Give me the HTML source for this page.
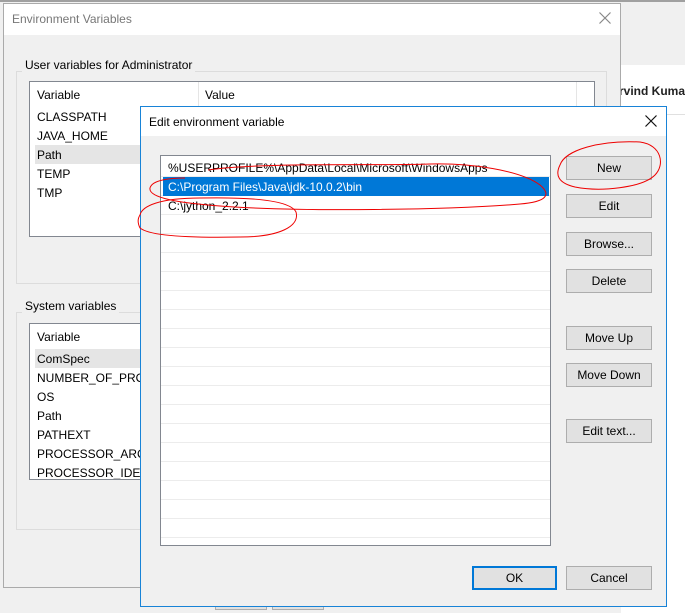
<!DOCTYPE html>
<html><head><style>
*{margin:0;padding:0;box-sizing:border-box}
body{width:685px;height:613px;position:relative;overflow:hidden;background:#f0f0f0;font-family:"Liberation Sans",sans-serif;font-size:12px;color:#000}
.a{position:absolute}
.btn{position:absolute;background:#e1e1e1;border:1px solid #adadad;text-align:center;line-height:22px;font-size:12px;width:86px;height:24px}
.row{position:absolute;left:37px;font-size:12px}
</style></head><body>
<div class="a" style="left:0;top:0;width:685px;height:2px;background:#a0a0a0"></div>
<div class="a" style="left:621px;top:65px;width:64px;height:548px;background:#fff"></div>
<div class="a" style="left:621px;top:114px;width:64px;height:1px;background:#e0e0e0"></div>
<div class="a" style="left:619px;top:84px;font-weight:bold;font-size:12px;color:#222;white-space:nowrap">rvind Kumar</div>
<div class="a" style="left:3px;top:3px;width:618px;height:585px;background:#f0f0f0;border:1px solid #aaa"></div>
<div class="a" style="left:4px;top:4px;width:616px;height:31px;background:#fff"></div>
<div class="a" style="left:12px;top:12px;color:#777;font-size:12px">Environment Variables</div>
<svg class="a" style="left:599px;top:12px" width="12" height="12"><path d="M0.5 0.5L11.5 11.5M11.5 0.5L0.5 11.5" stroke="#888" stroke-width="1.2"/></svg>
<div class="a" style="left:16px;top:71px;width:591px;height:213px;border:1px solid #dcdcdc"></div>
<div class="a" style="left:22px;top:58px;background:#f0f0f0;padding:0 3px">User variables for Administrator</div>
<div class="a" style="left:29px;top:81px;width:566px;height:156px;background:#fff;border:1px solid #828790"></div>
<div class="a" style="left:198px;top:82px;width:1px;height:24px;background:#e5e5e5"></div>
<div class="a" style="left:576px;top:82px;width:1px;height:24px;background:#e5e5e5"></div>
<div class="a" style="left:37px;top:88px">Variable</div>
<div class="a" style="left:205px;top:88px">Value</div>
<div class="a" style="left:35px;top:145px;width:110px;height:19px;background:#e5e5e5"></div>
<div class="row" style="top:110px">CLASSPATH</div>
<div class="row" style="top:129px">JAVA_HOME</div>
<div class="row" style="top:148px">Path</div>
<div class="row" style="top:167px">TEMP</div>
<div class="row" style="top:186px">TMP</div>
<div class="a" style="left:16px;top:312px;width:591px;height:218px;border:1px solid #dcdcdc"></div>
<div class="a" style="left:22px;top:299px;background:#f0f0f0;padding:0 3px">System variables</div>
<div class="a" style="left:29px;top:323px;width:120px;height:157px;background:#fff;border:1px solid #828790;border-right:none"></div>
<div class="a" style="left:37px;top:330px">Variable</div>
<div class="a" style="left:35px;top:349px;width:110px;height:19px;background:#e5e5e5"></div>
<div class="row" style="top:352px">ComSpec</div>
<div class="row" style="top:371px;white-space:nowrap">NUMBER_OF_PROC</div>
<div class="row" style="top:390px">OS</div>
<div class="row" style="top:409px">Path</div>
<div class="row" style="top:428px">PATHEXT</div>
<div class="row" style="top:447px;white-space:nowrap">PROCESSOR_ARCH</div>
<div class="row" style="top:466px;white-space:nowrap;height:13px;overflow:hidden">PROCESSOR_IDENT</div>
<div class="a" style="left:215px;top:598px;width:52px;height:12px;background:#e1e1e1;border:1px solid #adadad"></div>
<div class="a" style="left:272px;top:598px;width:52px;height:12px;background:#e1e1e1;border:1px solid #adadad"></div>
<div class="a" style="left:140px;top:106px;width:527px;height:501px;background:#f0f0f0;border:1px solid #1883d7"></div>
<div class="a" style="left:141px;top:107px;width:525px;height:29px;background:#fff"></div>
<div class="a" style="left:149px;top:115px">Edit environment variable</div>
<svg class="a" style="left:645px;top:115px" width="12" height="12"><path d="M0.5 0.5L11.5 11.5M11.5 0.5L0.5 11.5" stroke="#111" stroke-width="1.2"/></svg>
<div class="a" style="left:160px;top:155px;width:391px;height:391px;background:#fff;border:1px solid #828790;
background-image:repeating-linear-gradient(to bottom,transparent 0,transparent 18px,#ececec 18px,#ececec 19px);background-position:0 2px"></div>
<div class="a" style="left:163px;top:177px;width:386px;height:19px;background:#0078d7"></div>
<div class="a" style="left:168px;top:161px">%USERPROFILE%\AppData\Local\Microsoft\WindowsApps</div>
<div class="a" style="left:168px;top:180px;color:#fff">C:\Program Files\Java\jdk-10.0.2\bin</div>
<div class="a" style="left:168px;top:199px">C:\jython_2.2.1</div>
<div class="btn" style="left:566px;top:156px">New</div>
<div class="btn" style="left:566px;top:194px">Edit</div>
<div class="btn" style="left:566px;top:232px">Browse...</div>
<div class="btn" style="left:566px;top:269px">Delete</div>
<div class="btn" style="left:566px;top:326px">Move Up</div>
<div class="btn" style="left:566px;top:363px">Move Down</div>
<div class="btn" style="left:566px;top:419px">Edit text...</div>
<div class="btn" style="left:472px;top:566px;width:85px;border:2px solid #0078d7;line-height:20px">OK</div>
<div class="btn" style="left:566px;top:566px">Cancel</div>
<svg class="a" style="left:0;top:0" width="685" height="613">
<g fill="none" stroke="#e00" stroke-width="1">
<path d="M208 170 C260 162 380 166 430 164 C470 163 520 170 540 185 C552 195 546 202 520 204 C450 210 300 212 220 206 C180 203 148 198 150 188 C152 180 170 178 185 178"/>
<path d="M140 215 C142 206 160 198 200 198 C250 197 290 200 296 212 C300 226 280 237 240 237 C190 238 150 236 140 228 C137 222 138 218 140 215"/>
<path d="M560 165 C565 150 600 140 640 142 C662 145 665 165 655 175 C642 188 600 192 575 187 C558 183 555 175 560 165"/>
</g></svg>
</body></html>
